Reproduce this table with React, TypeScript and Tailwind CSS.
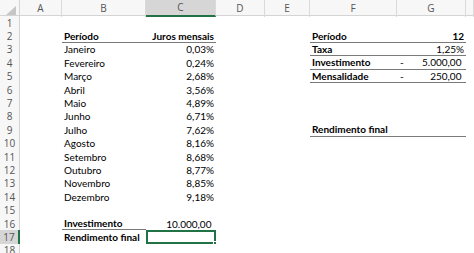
// Spreadsheet: monthly interest table (Excel-like view, gridlines hidden)

type CellSpec = {
    text?: string;
    right?: boolean;
    bold?: boolean;
    line?: boolean;
    dash?: boolean;
};

type RowSpec = {
    b?: CellSpec;
    c?: CellSpec;
    f?: CellSpec;
    g?: CellSpec;
};

const columns = ['A', 'B', 'C', 'D', 'E', 'F', 'G', ''];

const months: [string, string][] = [
    ['Janeiro', '0,03%'],
    ['Fevereiro', '0,24%'],
    ['Março', '2,68%'],
    ['Abril', '3,56%'],
    ['Maio', '4,89%'],
    ['Junho', '6,71%'],
    ['Julho', '7,62%'],
    ['Agosto', '8,16%'],
    ['Setembro', '8,68%'],
    ['Outubro', '8,77%'],
    ['Novembro', '8,85%'],
    ['Dezembro', '9,18%'],
];

const sideTable: Record<number, { f?: CellSpec; g?: CellSpec }> = {
    2: { f: { text: 'Período', bold: true, line: true }, g: { text: '12', bold: true, right: true, line: true } },
    3: { f: { text: 'Taxa', bold: true, line: true }, g: { text: '1,25%', right: true, line: true } },
    4: { f: { text: 'Investimento', bold: true, line: true }, g: { text: '5.000,00 ', right: true, line: true, dash: true } },
    5: { f: { text: 'Mensalidade', bold: true, line: true }, g: { text: '250,00 ', right: true, line: true, dash: true } },
    9: { f: { text: 'Rendimento final', bold: true, line: true }, g: { line: true } },
};

function buildRows(): RowSpec[] {
    const rows: RowSpec[] = [];
    for (let n = 1; n <= 18; n++) {
        const row: RowSpec = { ...sideTable[n] };
        if (n === 2) {
            row.b = { text: 'Período', bold: true, line: true };
            row.c = { text: 'Juros mensais', bold: true, right: true, line: true };
        }
        if (n >= 3 && n <= 14) {
            const [m, v] = months[n - 3];
            row.b = { text: m };
            row.c = { text: v, right: true };
        }
        if (n === 16) {
            row.b = { text: 'Investimento', bold: true, line: true };
            row.c = { text: '10.000,00 ', right: true };
        }
        if (n === 17) {
            row.b = { text: 'Rendimento final', bold: true };
        }
        rows.push(row);
    }
    return rows;
}

// ── One worksheet cell ───────────────────────────────────────
function Cell({ spec }: { spec?: CellSpec }) {
    if (!spec) return <div />;
    return (
        <div
            className={`flex items-center px-[2px] whitespace-pre overflow-visible ${spec.right ? 'justify-end' : 'justify-start'} ${spec.bold ? 'font-bold' : ''} ${spec.line ? 'border-b border-[#7a7a7a]' : ''} relative`}
        >
            {spec.dash && <span className="absolute left-[3px]">-</span>}
            {spec.text}
        </div>
    );
}

const gridCols = 'grid grid-cols-[20px_42px_84px_70px_49px_45px_87px_69px_1fr]';

export default function App() {
    const rows = buildRows();
    return (
        <div className="w-[474px] h-[253px] overflow-hidden bg-white text-black font-['Lato','Open_Sans',sans-serif] text-[10px]">
            {/* Column headers */}
            <div className={`${gridCols} h-[16px] bg-[#f7f7f7] border-b border-[#d4d4d4] text-[#555] font-['Open_Sans',sans-serif] text-[10px]`}>
                <div className="relative border-r border-[#d4d4d4]">
                    <div className="absolute right-[3px] bottom-[2px] w-0 h-0 border-l-[10px] border-l-transparent border-b-[9px] border-b-[#c6c6c6]" />
                </div>
                {columns.map((c) => (
                    <div
                        key={c || 'H'}
                        className={`flex items-center justify-center border-r border-[#dadada] ${c === 'C' ? 'bg-[#d6d6d6] border-b-2 border-b-[#217346]' : ''}`}
                    >
                        {c}
                    </div>
                ))}
            </div>

            {/* Body rows */}
            {rows.map((row, i) => {
                const n = i + 1;
                const selected = n === 17;
                return (
                    <div key={n} className={`${gridCols} h-[13.4px] leading-none`}>
                        <div
                            className={`flex items-center justify-center text-[#555] font-['Open_Sans',sans-serif] text-[10px] border-r ${selected ? 'bg-[#d6d6d6] border-r-2 border-r-[#217346]' : 'bg-[#f7f7f7] border-r-[#d4d4d4]'}`}
                        >
                            {n}
                        </div>
                        <div />
                        <Cell spec={row.b} />
                        {selected ? (
                            <div className="relative border-2 border-[#217346]">
                                <div className="absolute -right-[3px] -bottom-[3px] w-[4px] h-[4px] bg-[#217346] border border-white" />
                            </div>
                        ) : (
                            <Cell spec={row.c} />
                        )}
                        <div />
                        <div />
                        <Cell spec={row.f} />
                        <Cell spec={row.g} />
                        <div />
                    </div>
                );
            })}
        </div>
    );
}
